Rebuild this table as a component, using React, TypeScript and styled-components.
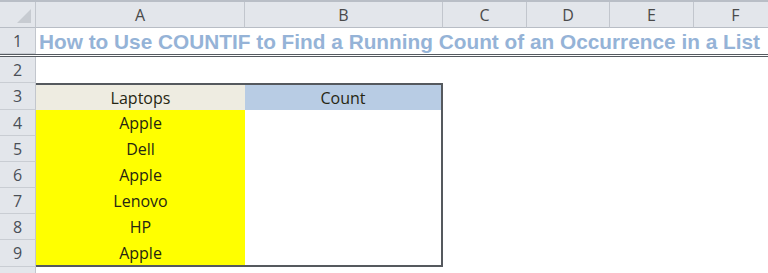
import * as React from 'react';
import styled, { createGlobalStyle } from 'styled-components';

const GlobalStyle = createGlobalStyle`
    html, body {
        margin: 0;
        padding: 0;
        background: #ffffff;
    }
`;

const COLUMNS = [
    { label: 'A', width: 209 },
    { label: 'B', width: 198 },
    { label: 'C', width: 84 },
    { label: 'D', width: 83 },
    { label: 'E', width: 84 },
    { label: 'F', width: 84 },
];

const LAPTOPS = ['Apple', 'Dell', 'Apple', 'Lenovo', 'HP', 'Apple'];

const Sheet = styled.div`
    width: 768px;
    height: 273px;
    overflow: hidden;
    background: #ffffff;
    border-top: 2px solid #b9bec6;
    box-sizing: border-box;
    font-family: 'Open Sans', 'Liberation Sans', sans-serif;
`;

const Row = styled.div<{ $height: number; $double?: boolean }>`
    display: flex;
    height: ${(p) => p.$height}px;
    box-sizing: border-box;
    border-bottom: ${(p) => (p.$double ? '3px double #555a60' : 'none')};
`;

const Corner = styled.div`
    width: 36px;
    flex: none;
    position: relative;
    background: #e3e6eb;
    border-right: 1px solid #c2c6cd;
    border-bottom: 1px solid #b8bdc5;
    box-sizing: border-box;

    &::after {
        content: '';
        position: absolute;
        right: 4px;
        bottom: 4px;
        border-left: 14px solid transparent;
        border-bottom: 14px solid #c7cbd1;
    }
`;

const ColHeader = styled.div<{ $width: number }>`
    width: ${(p) => p.$width}px;
    flex: none;
    display: flex;
    align-items: center;
    justify-content: center;
    background: #e3e6eb;
    border-right: 1px solid #c2c6cd;
    border-bottom: 1px solid #b8bdc5;
    box-sizing: border-box;
    color: #4a4a4a;
    font-size: 16px;
`;

const RowHeader = styled.div`
    width: 36px;
    flex: none;
    display: flex;
    align-items: center;
    justify-content: center;
    background: #e3e6eb;
    border-right: 1px solid #c2c6cd;
    border-bottom: 1px solid #c9cdd3;
    box-sizing: border-box;
    color: #4a4f57;
    font-size: 16px;
`;

const TitleCell = styled.div`
    flex: 1;
    display: flex;
    align-items: center;
    padding-left: 3px;
    padding-top: 2px;
    white-space: nowrap;
    color: #95b3d7;
    font-family: 'Liberation Sans', Arial, sans-serif;
    font-weight: bold;
    font-size: 20.8px;
`;

const Blank = styled.div`
    flex: 1;
`;

const Cell = styled.div<{ $width: number; $bg?: string; $boxed?: boolean; $top?: boolean; $bottom?: boolean }>`
    width: ${(p) => p.$width}px;
    flex: none;
    display: flex;
    align-items: center;
    justify-content: center;
    box-sizing: border-box;
    background: ${(p) => p.$bg ?? '#ffffff'};
    border-right: ${(p) => (p.$boxed ? '2px solid #55595e' : 'none')};
    border-top: ${(p) => (p.$top ? '2px solid #55595e' : 'none')};
    border-bottom: ${(p) => (p.$bottom ? '2px solid #55595e' : 'none')};
    color: #262612;
    font-size: 16px;
`;

function App() {
    return (
        <>
            <GlobalStyle />
            <Sheet>
                <Row $height={26}>
                    <Corner />
                    {COLUMNS.map((c) => (
                        <ColHeader key={c.label} $width={c.width}>
                            {c.label}
                        </ColHeader>
                    ))}
                </Row>
                <Row $height={29} $double>
                    <RowHeader>1</RowHeader>
                    <TitleCell>How to Use COUNTIF to Find a Running Count of an Occurrence in a List</TitleCell>
                </Row>
                <Row $height={26}>
                    <RowHeader>2</RowHeader>
                    <Blank />
                </Row>
                <Row $height={27}>
                    <RowHeader>3</RowHeader>
                    <Cell $width={209} $bg="#eeece1" $top>
                        Laptops
                    </Cell>
                    <Cell $width={198} $bg="#b8cce4" $top $boxed>
                        Count
                    </Cell>
                </Row>
                {LAPTOPS.map((name, i) => (
                    <Row key={i} $height={i === LAPTOPS.length - 1 ? 27 : 26}>
                        <RowHeader>{i + 4}</RowHeader>
                        <Cell $width={209} $bg="#ffff00" $bottom={i === LAPTOPS.length - 1}>
                            {name}
                        </Cell>
                        <Cell $width={198} $boxed $bottom={i === LAPTOPS.length - 1} />
                    </Row>
                ))}
                <Row $height={26}>
                    <RowHeader />
                    <Blank />
                </Row>
            </Sheet>
        </>
    );
}

export default App;
